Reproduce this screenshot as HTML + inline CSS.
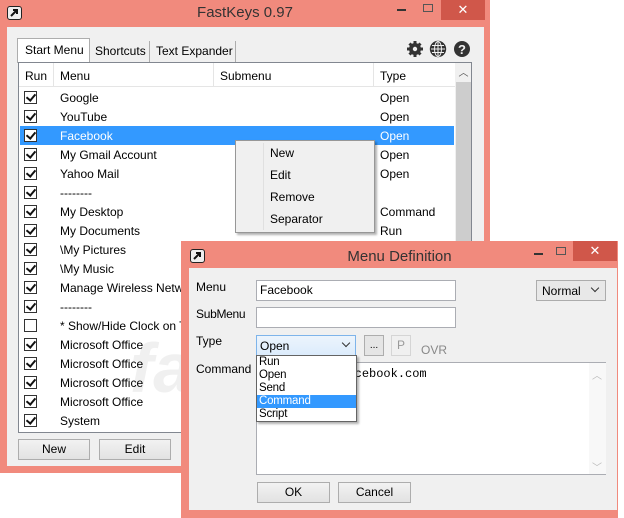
<!DOCTYPE html>
<html><head><meta charset="utf-8"><style>
*{box-sizing:border-box;margin:0;padding:0}
body{width:624px;height:518px;background:#fff;position:relative;overflow:hidden;font-family:"Liberation Sans",sans-serif;font-size:12px;color:#000}
.a{position:absolute}
.frame{background:#f18a7d}
.client{background:#f0f0f0}
.btn{position:absolute;background:linear-gradient(#f2f2f2,#e2e2e2);border:1px solid #adadad;text-align:center;font-size:12px;line-height:18px}
.cb{position:absolute;left:24px;width:13px;height:13px;border:1px solid #333;background:#fff}
.cb.k::after{content:"";position:absolute;left:3px;top:0px;width:4px;height:7px;border:solid #111;border-width:0 2px 2px 0;transform:rotate(40deg)}
.row{position:absolute;left:0;width:435px;height:19px;font-size:12px;line-height:20px}
.inp{position:absolute;background:#fff;border:1px solid #abadb3;padding-left:3px;line-height:18px;font-size:12px}
.ic{position:absolute;left:7px;top:6px;width:15px;height:14px;border:1.5px solid #222;border-radius:3px;background:#eee}
.dn{position:absolute;width:6px;height:6px;border:solid #333;border-width:0 1.5px 1.5px 0;transform:rotate(45deg)}
</style></head><body>
<div class="a frame" style="left:0;top:0;width:490px;height:473px"></div>
<div class="ic a"><svg width="12" height="11" style="position:absolute;left:0;top:0"><path d="M3 9 L9 3 M5 3 H9 V7" stroke="#111" stroke-width="2" fill="none"/></svg></div>
<div class="a" style="left:0;top:4px;width:490px;text-align:center;font-size:15px;color:#333">FastKeys 0.97</div>
<div class="a" style="left:397px;top:9px;width:9px;height:2px;background:#333"></div>
<div class="a" style="left:423px;top:4px;width:10px;height:8px;border:1px solid #555"></div>
<div class="a" style="left:441px;top:0;width:44px;height:20px;background:#d0574a;color:#fff;text-align:center;font-size:13px;line-height:19px">✕</div>
<div class="a client" style="left:7px;top:27px;width:477px;height:439px"></div>
<div class="a" style="left:17px;top:38px;width:73px;height:25px;background:#fff;border:1px solid #adadad;border-bottom:none;font-size:12px;padding:4px 0 0 7px">Start Menu</div>
<div class="a" style="left:90px;top:41px;width:60px;height:21px;border-right:1px solid #adadad;font-size:12px;padding:3px 0 0 5px">Shortcuts</div>
<div class="a" style="left:150px;top:41px;width:86px;height:21px;border-right:1px solid #adadad;font-size:12px;padding:3px 0 0 6px">Text Expander</div>
<svg class="a" style="left:405px;top:39px" width="65" height="20">
<g fill="#333"><circle cx="10" cy="10" r="6"/><g stroke="#333" stroke-width="3"><path d="M10 2V18M2 10H18M4.5 4.5L15.5 15.5M15.5 4.5L4.5 15.5"/></g><circle cx="10" cy="10" r="2.2" fill="#f0f0f0"/></g>
<g stroke="#333" fill="none" stroke-width="1.4"><circle cx="33" cy="10" r="7.5" fill="#333"/><g stroke="#f0f0f0" stroke-width="1"><path d="M26 10H40M33 3V17M27 6.5H39M27 13.5H39"/><ellipse cx="33" cy="10" rx="3.5" ry="7.5"/></g></g>
<circle cx="57" cy="10" r="8" fill="#333"/><text x="57" y="15" text-anchor="middle" font-family="Liberation Sans" font-weight="bold" font-size="13" fill="#f0f0f0">?</text>
</svg>
<div class="a" style="left:18px;top:62px;width:454px;height:371px;background:#fff;border:1px solid #828790;overflow:hidden">
<div class="a" style="left:0;top:0;width:436px;height:24px;border-bottom:1px solid #e5e5e5;font-size:12px;line-height:26px">
<span class="a" style="left:6px">Run</span><span class="a" style="left:41px">Menu</span><span class="a" style="left:201px">Submenu</span><span class="a" style="left:361px">Type</span>
<div class="a" style="left:34px;top:0;width:1px;height:24px;background:#e5e5e5"></div><div class="a" style="left:194px;top:0;width:1px;height:24px;background:#e5e5e5"></div><div class="a" style="left:354px;top:0;width:1px;height:24px;background:#e5e5e5"></div>
</div>
<div class="a" style="left:436px;top:0;width:17px;height:369px;background:#f0f0f0"></div>
<div class="a" style="left:437px;top:19px;width:15px;height:350px;background:#cdcdcd"></div>
<div class="a" style="left:436px;top:1px;width:17px;text-align:center;font-size:10px;color:#555">︿</div>
<div class="a" style="left:111px;top:270px;font-size:70px;font-weight:bold;font-style:italic;color:#f0f0f0;line-height:70px">fa</div>
</div>
<div class="a" style="left:18px;top:88px;width:436px;height:344px;overflow:hidden">
<div class="row" style="top:0"><div class="cb k" style="top:3px;left:6px"></div><span class="a" style="left:42px">Google</span><span class="a" style="left:362px">Open</span></div>
<div class="row" style="top:19px"><div class="cb k" style="top:3px;left:6px"></div><span class="a" style="left:42px">YouTube</span><span class="a" style="left:362px">Open</span></div>
<div class="row" style="top:38px;background:#3399ff;color:#fff;left:2px;width:435px"><div class="cb k" style="top:3px;left:4px"></div><span class="a" style="left:40px">Facebook</span><span class="a" style="left:360px">Open</span></div>
<div class="row" style="top:57px"><div class="cb k" style="top:3px;left:6px"></div><span class="a" style="left:42px">My Gmail Account</span><span class="a" style="left:362px">Open</span></div>
<div class="row" style="top:76px"><div class="cb k" style="top:3px;left:6px"></div><span class="a" style="left:42px">Yahoo Mail</span><span class="a" style="left:362px">Open</span></div>
<div class="row" style="top:95px"><div class="cb k" style="top:3px;left:6px"></div><span class="a" style="left:42px">--------</span></div>
<div class="row" style="top:114px"><div class="cb k" style="top:3px;left:6px"></div><span class="a" style="left:42px">My Desktop</span><span class="a" style="left:362px">Command</span></div>
<div class="row" style="top:133px"><div class="cb k" style="top:3px;left:6px"></div><span class="a" style="left:42px">My Documents</span><span class="a" style="left:362px">Run</span></div>
<div class="row" style="top:152px"><div class="cb k" style="top:3px;left:6px"></div><span class="a" style="left:42px">\My Pictures</span></div>
<div class="row" style="top:171px"><div class="cb k" style="top:3px;left:6px"></div><span class="a" style="left:42px">\My Music</span></div>
<div class="row" style="top:190px"><div class="cb k" style="top:3px;left:6px"></div><span class="a" style="left:42px">Manage Wireless Networks</span></div>
<div class="row" style="top:209px"><div class="cb k" style="top:3px;left:6px"></div><span class="a" style="left:42px">--------</span></div>
<div class="row" style="top:228px"><div class="cb" style="top:3px;left:6px"></div><span class="a" style="left:42px">* Show/Hide Clock on Taskbar</span></div>
<div class="row" style="top:247px"><div class="cb k" style="top:3px;left:6px"></div><span class="a" style="left:42px">Microsoft Office</span></div>
<div class="row" style="top:266px"><div class="cb k" style="top:3px;left:6px"></div><span class="a" style="left:42px">Microsoft Office</span></div>
<div class="row" style="top:285px"><div class="cb k" style="top:3px;left:6px"></div><span class="a" style="left:42px">Microsoft Office</span></div>
<div class="row" style="top:304px"><div class="cb k" style="top:3px;left:6px"></div><span class="a" style="left:42px">Microsoft Office</span></div>
<div class="row" style="top:323px"><div class="cb k" style="top:3px;left:6px"></div><span class="a" style="left:42px">System</span></div>
</div>
<div class="btn" style="left:18px;top:439px;width:72px;height:21px">New</div>
<div class="btn" style="left:99px;top:439px;width:72px;height:21px">Edit</div>
<div class="a" style="left:235px;top:140px;width:140px;height:93px;background:#f0f0f0;border:1px solid #979797;box-shadow:2px 2px 2px rgba(0,0,0,.3)">
<div class="a" style="left:27px;top:2px;width:1px;height:87px;background:#e0e0e0"></div>
<div class="a" style="left:34px;top:5px;line-height:14px">New</div>
<div class="a" style="left:34px;top:27px;line-height:14px">Edit</div>
<div class="a" style="left:34px;top:49px;line-height:14px">Remove</div>
<div class="a" style="left:34px;top:71px;line-height:14px">Separator</div>
</div>
<div class="a frame" style="left:181px;top:241px;width:437px;height:277px"></div>
<div class="ic a" style="left:190px;top:249px"><svg width="12" height="11" style="position:absolute;left:0;top:0"><path d="M3 9 L9 3 M5 3 H9 V7" stroke="#111" stroke-width="2" fill="none"/></svg></div>
<div class="a" style="left:181px;top:248px;width:437px;text-align:center;font-size:15px;color:#333">Menu Definition</div>
<div class="a" style="left:534px;top:253px;width:9px;height:2px;background:#333"></div>
<div class="a" style="left:556px;top:247px;width:10px;height:8px;border:1px solid #555"></div>
<div class="a" style="left:573px;top:241px;width:44px;height:20px;background:#d0574a;color:#fff;text-align:center;font-size:13px;line-height:19px">✕</div>
<div class="a client" style="left:189px;top:268px;width:428px;height:242px"></div>
<div class="a" style="left:196px;top:280px;font-size:12px">Menu</div>
<div class="a" style="left:196px;top:307px;font-size:12px;letter-spacing:-.3px">SubMenu</div>
<div class="a" style="left:196px;top:334px;font-size:12px">Type</div>
<div class="a" style="left:196px;top:362px;font-size:12px">Command</div>
<div class="inp" style="left:256px;top:280px;width:200px;height:21px">Facebook</div>
<div class="inp" style="left:256px;top:307px;width:200px;height:21px"></div>
<div class="a" style="left:536px;top:280px;width:70px;height:21px;border:1px solid #acacac;background:#e8e8e8;padding:3px 0 0 5px">Normal<div class="dn" style="left:55px;top:4px"></div></div>
<div class="a" style="left:256px;top:335px;width:100px;height:21px;border:1px solid #7eb4ea;background:linear-gradient(#ecf4fc,#dcecfc);padding:3px 0 0 3px">Open<div class="dn" style="left:86px;top:4px"></div></div>
<div class="a" style="left:364px;top:335px;width:20px;height:21px;border:1px solid #adadad;background:#e5e5e5;text-align:center;font-size:10px;line-height:20px">...</div>
<div class="a" style="left:391px;top:335px;width:20px;height:21px;border:1px solid #d5d5d5;text-align:center;color:#999;line-height:19px">P</div>
<div class="a" style="left:421px;top:343px;color:#888">OVR</div>
<div class="a" style="left:256px;top:362px;width:350px;height:113px;background:#fff;border:1px solid #abadb3;font-family:'Liberation Mono',monospace;font-size:12px;padding:4px 0 0 4px">http://www.facebook.com
<div class="a" style="left:332px;top:0;width:17px;height:111px;background:#f8f8f8"></div>
<div class="a" style="left:335px;top:4px;color:#bbb;font-size:10px;font-family:'Liberation Sans'">︿</div><div class="a" style="left:335px;top:96px;color:#bbb;font-size:10px;font-family:'Liberation Sans'">﹀</div></div>
<div class="a" style="left:256px;top:355px;width:101px;height:67px;background:#fff;border:1px solid #646464;box-shadow:2px 2px 2px rgba(0,0,0,.3);font-size:11.5px;line-height:13px;letter-spacing:-.2px">
<div style="padding-left:2px">Run</div><div style="padding-left:2px">Open</div><div style="padding-left:2px">Send</div><div style="padding-left:2px;background:#3399ff;color:#fff">Command</div><div style="padding-left:2px">Script</div></div>
<div class="btn" style="left:257px;top:482px;width:73px;height:21px">OK</div>
<div class="btn" style="left:338px;top:482px;width:73px;height:21px">Cancel</div>
</body></html>
